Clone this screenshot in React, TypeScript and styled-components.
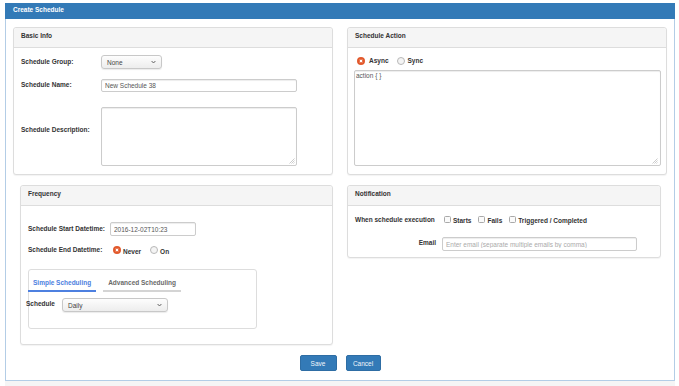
import React from "react";
import styled, { createGlobalStyle } from "styled-components";

const Global = createGlobalStyle`
  html, body { margin: 0; padding: 0; background: #fff; }
  body { font-family: "Liberation Sans", Arial, sans-serif; color: #333; }
  * { box-sizing: border-box; }
`;

const Page = styled.div`
  width: 679px;
  height: 386px;
  padding: 3px 4px 0 5px;
  display: flex;
  flex-direction: column;
`;

const Outer = styled.div`
  border: 1px solid #b3cde6;
  border-top: none;
  background: #fff;
`;

const OuterHeading = styled.div`
  height: 16px;
  margin: 0 -1px;
  background: #337ab7;
  color: #fff;
  font-weight: bold;
  font-size: 6.5px;
  line-height: 10px;
  padding: 2px 8px 0;
`;

const OuterBody = styled.div`
  padding: 8px 7px 9px 7px;
`;

const Grid = styled.div`
  display: grid;
  grid-template-columns: 320px 320px;
  column-gap: 14px;
  row-gap: 10px;
`;

const Card = styled.div<{ $ml?: number; $mr?: number }>`
  border: 1px solid #ddd;
  border-radius: 3px;
  background: #fff;
  box-shadow: 0 1px 1px rgba(0, 0, 0, 0.05);
  margin-left: ${(p) => p.$ml || 0}px;
  margin-right: ${(p) => p.$mr || 0}px;
  align-self: start;
`;

const CardHeading = styled.div`
  height: 20px;
  background: #f5f5f5;
  border-bottom: 1px solid #ddd;
  border-radius: 3px 3px 0 0;
  font-weight: bold;
  font-size: 6.5px;
  line-height: 10px;
  padding: 3px 7px 0;
  color: #333;
`;

const CardBody = styled.div<{ $pad: string }>`
  padding: ${(p) => p.$pad};
`;

const Row = styled.div<{ $mt?: number; $align?: string }>`
  display: flex;
  align-items: ${(p) => p.$align || "center"};
  margin-top: ${(p) => p.$mt || 0}px;
`;

const Label = styled.div<{ $w: number; $right?: boolean; $mb?: number }>`
  width: ${(p) => p.$w}px;
  flex: none;
  font-weight: bold;
  font-size: 6.5px;
  line-height: 10px;
  color: #333;
  text-align: ${(p) => (p.$right ? "right" : "left")};
  margin-bottom: ${(p) => p.$mb || 0}px;
`;

const TextInput = styled.input<{ $w: number; $h: number }>`
  width: ${(p) => p.$w}px;
  height: ${(p) => p.$h}px;
  border: 1px solid #ccc;
  border-radius: 2px;
  box-shadow: inset 0 1px 1px rgba(0, 0, 0, 0.075);
  font-family: "Liberation Sans", Arial, sans-serif;
  font-size: 6.5px;
  color: #555;
  padding: 0 3px;
  outline: none;
  &::placeholder { color: #aaa; }
`;

const AreaWrap = styled.div`
  position: relative;
  flex: none;
`;

const TextArea = styled.textarea<{ $w: number; $h: number }>`
  display: block;
  width: ${(p) => p.$w}px;
  height: ${(p) => p.$h}px;
  border: 1px solid #ccc;
  border-radius: 2px;
  box-shadow: inset 0 1px 1px rgba(0, 0, 0, 0.075);
  font-family: "Liberation Sans", Arial, sans-serif;
  font-size: 6.5px;
  line-height: 8px;
  color: #555;
  padding: 1px 1px;
  resize: none;
  outline: none;
`;

const Grip = styled.svg`
  position: absolute;
  right: 2px;
  bottom: 2px;
  width: 6px;
  height: 6px;
`;

const SelectBox = styled.div<{ $w: number }>`
  width: ${(p) => p.$w}px;
  height: 14px;
  border: 1px solid #c8c8c8;
  border-radius: 3px;
  background: linear-gradient(#fdfdfd, #ededed);
  box-shadow: 0 1px 1px rgba(0, 0, 0, 0.08);
  display: flex;
  align-items: center;
  justify-content: space-between;
  padding: 0 5px 0 5px;
  font-size: 6.5px;
  color: #444;
`;

const RadioDot = styled.span<{ $on?: boolean }>`
  width: 8px;
  height: 8px;
  border-radius: 50%;
  flex: none;
  background: ${(p) => (p.$on ? "#fff" : "#f4f4f4")};
  border: ${(p) => (p.$on ? "2.5px solid #e2592c" : "1px solid #b8b8b8")};
  box-shadow: ${(p) => (p.$on ? "inset 0 0 0 0.8px #e2592c" : "none")};
`;

const Check = styled.span`
  width: 7px;
  height: 7px;
  border: 1px solid #a9a9a9;
  border-radius: 1.5px;
  background: #fafafa;
  flex: none;
`;

const OptText = styled.span<{ $ml: number; $mr?: number; $dy?: number }>`
  font-weight: bold;
  font-size: 6.5px;
  line-height: 10px;
  color: #333;
  margin-left: ${(p) => p.$ml}px;
  margin-right: ${(p) => p.$mr || 0}px;
  position: relative;
  top: ${(p) => p.$dy || 0}px;
`;

const TabBox = styled.div`
  width: 229px;
  height: 60px;
  border: 1px solid #ddd;
  border-radius: 3px;
  margin-top: 13px;
`;

const Tabs = styled.div`
  display: flex;
  gap: 7px;
  margin-left: -1px;
`;

const Tab = styled.div<{ $active?: boolean }>`
  padding: 8px 5px 2px;
  font-weight: bold;
  font-size: 6.5px;
  line-height: 10px;
  color: ${(p) => (p.$active ? "#4d80e0" : "#6a6a6a")};
  border-bottom: 2px solid ${(p) => (p.$active ? "#4d80e0" : "#d4d4d4")};
`;

const ScheduleRow = styled.div`
  display: flex;
  align-items: center;
  margin-top: 6px;
  margin-left: -3px;
`;

const Buttons = styled.div`
  display: flex;
  justify-content: center;
  gap: 9px;
  margin-top: 10px;
`;

const Button = styled.button<{ $w: number }>`
  width: ${(p) => p.$w}px;
  height: 16px;
  background: #337ab7;
  border: 1px solid #2e6da4;
  border-radius: 2px;
  color: #f2f6fb;
  font-family: "Liberation Sans", Arial, sans-serif;
  font-size: 6.5px;
  padding: 0;
`;

const Band = styled.div`
  height: 6px;
  background: #f5f5f5;
`;

const Chevron = () => (
  <svg width="5" height="4" viewBox="0 0 5 4">
    <path d="M0.6 1 L2.5 3 L4.4 1" fill="none" stroke="#555" strokeWidth="0.9" />
  </svg>
);

const GripIcon = () => (
  <Grip viewBox="0 0 6 6">
    <path d="M5.5 0.5 L0.5 5.5 M5.5 2.5 L2.5 5.5 M5.5 4.5 L4.5 5.5" stroke="#aaa" strokeWidth="0.6" />
  </Grip>
);

export default function App() {
  return (
    <Page>
      <Global />
      <Outer>
        <OuterHeading>Create Schedule</OuterHeading>
        <OuterBody>
          <Grid>
            <Card>
              <CardHeading>Basic Info</CardHeading>
              <CardBody $pad="7px 8px 8px 7px">
                <Row>
                  <Label $w={80}>Schedule Group:</Label>
                  <SelectBox $w={61}>
                    <span>None</span>
                    <Chevron />
                  </SelectBox>
                </Row>
                <Row $mt={10}>
                  <Label $w={80} $mb={2}>Schedule Name:</Label>
                  <TextInput $w={196} $h={13} defaultValue="New Schedule 38" />
                </Row>
                <Row $mt={15}>
                  <Label $w={80} $mb={14}>Schedule Description:</Label>
                  <AreaWrap>
                    <TextArea $w={196} $h={59} />
                    <GripIcon />
                  </AreaWrap>
                </Row>
              </CardBody>
            </Card>

            <Card>
              <CardHeading>Schedule Action</CardHeading>
              <CardBody $pad="7px 6px 8px 6px">
                <Row style={{ height: 12, paddingLeft: 3 }}>
                  <RadioDot $on />
                  <OptText $ml={4} $mr={8}>Async</OptText>
                  <RadioDot />
                  <OptText $ml={3}>Sync</OptText>
                </Row>
                <AreaWrap style={{ marginTop: 3 }}>
                  <TextArea $w={307} $h={96} defaultValue="action { }" />
                  <GripIcon />
                </AreaWrap>
              </CardBody>
            </Card>

            <Card $ml={7}>
              <CardHeading>Frequency</CardHeading>
              <CardBody $pad="16px 7px 15px 7px">
                <Row>
                  <Label $w={82}>Schedule Start Datetime:</Label>
                  <TextInput $w={86} $h={14} defaultValue="2016-12-02T10:23" />
                </Row>
                <Row $mt={8} style={{ height: 12 }}>
                  <Label $w={85}>Schedule End Datetime:</Label>
                  <RadioDot $on />
                  <OptText $ml={2} $mr={9} $dy={2}>Never</OptText>
                  <RadioDot />
                  <OptText $ml={2} $dy={2}>On</OptText>
                </Row>
                <TabBox>
                  <Tabs>
                    <Tab $active>Simple Scheduling</Tab>
                    <Tab>Advanced Scheduling</Tab>
                  </Tabs>
                  <ScheduleRow>
                    <Label $w={36} $mb={3}>Schedule</Label>
                    <SelectBox $w={106}>
                      <span>Daily</span>
                      <Chevron />
                    </SelectBox>
                  </ScheduleRow>
                </TabBox>
              </CardBody>
            </Card>

            <Card $mr={6}>
              <CardHeading>Notification</CardHeading>
              <CardBody $pad="8px 7px 6px 7px">
                <Row style={{ height: 11 }}>
                  <Label $w={89}>When schedule execution</Label>
                  <Check />
                  <OptText $ml={2} $mr={7} $dy={1}>Starts</OptText>
                  <Check />
                  <OptText $ml={2} $mr={7} $dy={1}>Fails</OptText>
                  <Check />
                  <OptText $ml={2} $dy={1}>Triggered / Completed</OptText>
                </Row>
                <Row $mt={12}>
                  <Label $w={81} $right $mb={3}>Email</Label>
                  <TextInput
                    $w={195}
                    $h={14}
                    style={{ marginLeft: 6 }}
                    placeholder="Enter email (separate multiple emails by comma)"
                  />
                </Row>
              </CardBody>
            </Card>
          </Grid>
          <Buttons>
            <Button $w={37}>Save</Button>
            <Button $w={35}>Cancel</Button>
          </Buttons>
        </OuterBody>
      </Outer>
      <Band />
    </Page>
  );
}
